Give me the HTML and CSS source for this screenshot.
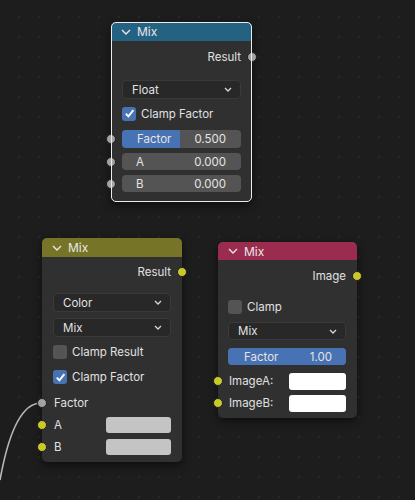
FILE: index.html
```html
<!DOCTYPE html>
<html>
<head>
<meta charset="utf-8">
<link rel="stylesheet" href="styles.css">
</head>
<body>
<div class="canvas">
  <svg class="wire" width="60" height="500" viewBox="0 0 60 500">
    <path d="M42 403 C 22 402, 9 430, 0 480" fill="none" stroke="#b8b8b8" stroke-width="1.6"/>
  </svg>

  <!-- Node 1: Float mix (selected) -->
  <div class="node n1 selected">
    <div class="head blue">
      <svg class="chev" width="10" height="6" viewBox="0 0 10 6"><path d="M1 1 L5 5 L9 1" fill="none" stroke="#e6e6e6" stroke-width="1.4"/></svg>
      <span>Mix</span>
    </div>
    <div class="body">
      <div class="row out r1-out"><span>Result</span><i class="sock right grey"></i></div>
      <div class="drop r1-drop"><span>Float</span><svg class="dchev" width="8" height="5" viewBox="0 0 8 5"><path d="M1 1 L4 4 L7 1" fill="none" stroke="#d8d8d8" stroke-width="1.3"/></svg></div>
      <div class="row check r1-check"><span class="box on"><svg width="11" height="11" viewBox="0 0 11 11"><path d="M1.8 5.6 L4.4 8.4 L9.4 2.2" fill="none" stroke="#fff" stroke-width="1.9"/></svg></span><span>Clamp Factor</span></div>
      <div class="field slider r1-fac"><i class="sock left grey"></i><div class="fill half"></div><span class="lab">Factor</span><span class="val">0.500</span></div>
      <div class="field r1-a"><i class="sock left grey"></i><span class="lab">A</span><span class="val">0.000</span></div>
      <div class="field r1-b"><i class="sock left grey"></i><span class="lab">B</span><span class="val">0.000</span></div>
    </div>
  </div>

  <!-- Node 2: Color mix -->
  <div class="node n2">
    <div class="head olive">
      <svg class="chev" width="10" height="6" viewBox="0 0 10 6"><path d="M1 1 L5 5 L9 1" fill="none" stroke="#e6e6e6" stroke-width="1.4"/></svg>
      <span>Mix</span>
    </div>
    <div class="body">
      <div class="row out r2-out"><span>Result</span><i class="sock right yellow"></i></div>
      <div class="drop r2-d1"><span>Color</span><svg class="dchev" width="8" height="5" viewBox="0 0 8 5"><path d="M1 1 L4 4 L7 1" fill="none" stroke="#d8d8d8" stroke-width="1.3"/></svg></div>
      <div class="drop r2-d2"><span>Mix</span><svg class="dchev" width="8" height="5" viewBox="0 0 8 5"><path d="M1 1 L4 4 L7 1" fill="none" stroke="#d8d8d8" stroke-width="1.3"/></svg></div>
      <div class="row check r2-c1"><span class="box"></span><span>Clamp Result</span></div>
      <div class="row check r2-c2"><span class="box on"><svg width="11" height="11" viewBox="0 0 11 11"><path d="M1.8 5.6 L4.4 8.4 L9.4 2.2" fill="none" stroke="#fff" stroke-width="1.9"/></svg></span><span>Clamp Factor</span></div>
      <div class="row in r2-fac"><i class="sock left grey"></i><span>Factor</span></div>
      <div class="row in r2-a"><i class="sock left yellow"></i><span>A</span><span class="swatch grey-sw"></span></div>
      <div class="row in r2-b"><i class="sock left yellow"></i><span>B</span><span class="swatch grey-sw"></span></div>
    </div>
  </div>

  <!-- Node 3: Image mix -->
  <div class="node n3">
    <div class="head red">
      <svg class="chev" width="10" height="6" viewBox="0 0 10 6"><path d="M1 1 L5 5 L9 1" fill="none" stroke="#e6e6e6" stroke-width="1.4"/></svg>
      <span>Mix</span>
    </div>
    <div class="body">
      <div class="row out r3-out"><span>Image</span><i class="sock right yellow"></i></div>
      <div class="row check r3-c"><span class="box"></span><span>Clamp</span></div>
      <div class="drop r3-d"><span>Mix</span><svg class="dchev" width="8" height="5" viewBox="0 0 8 5"><path d="M1 1 L4 4 L7 1" fill="none" stroke="#d8d8d8" stroke-width="1.3"/></svg></div>
      <div class="field slider r3-fac"><div class="fill full"></div><span class="lab">Factor</span><span class="val">1.00</span></div>
      <div class="row in r3-a"><i class="sock left yellow"></i><span>ImageA:</span><span class="swatch white-sw"></span></div>
      <div class="row in r3-b"><i class="sock left yellow"></i><span>ImageB:</span><span class="swatch white-sw"></span></div>
    </div>
  </div>
</div>
</body>
</html>
```

FILE: styles.css
```css
* { box-sizing: border-box; }
html, body { margin: 0; padding: 0; }
body {
  font-family: Inter, "DejaVu Sans", "Liberation Sans", sans-serif;
  font-size: 11.5px;
  color: #e0e0e0;
}
.canvas {
  position: relative;
  width: 415px;
  height: 500px;
  overflow: hidden;
  background-color: #1d1d1d;
  background-image: radial-gradient(circle, #272727 1.2px, transparent 1.6px);
  background-size: 20px 20px;
  background-position: 9px 7px;
}
.wire { position: absolute; left: 0; top: 0; }

.node {
  position: absolute;
  background: #303030;
  border-radius: 5px;
  box-shadow: 0 3px 8px rgba(0,0,0,0.55);
}
.node.selected::after {
  content: "";
  position: absolute;
  inset: 0;
  border: 1px solid #ececec;
  border-radius: 5px;
  pointer-events: none;
}
.n1 { left: 111px; top: 22px; width: 141px; height: 180px; }
.n2 { left: 42px; top: 238px; width: 140px; height: 224px; }
.n3 { left: 218px; top: 242px; width: 139px; height: 176px; }

.head {
  height: 19px;
  border-radius: 5px 5px 0 0;
  display: flex;
  align-items: center;
  padding-left: 10px;
  gap: 6px;
  color: #e8e8e8;
  font-size: 12px;
}
.n3 .head { height: 18px; }
.head.blue { background: #246283; }
.head.olive { background: #767427; }
.head.red { background: #9b2c4f; }
.chev { display: block; }

.body { padding: 0 11px; }
.n3 .body { padding: 0 11px 0 10px; }

.row {
  position: relative;
  display: flex;
  align-items: center;
  height: 18px;
}
.row.out { justify-content: flex-end; height: 20px; }
.row.check { gap: 5px; }
.row.in { padding-left: 1px; gap: 0; }

.sock {
  position: absolute;
  width: 10px;
  height: 10px;
  border-radius: 50%;
  border: 1px solid #202020;
  top: 50%;
  margin-top: -5px;
}
.sock.grey { background: #a3a3a3; }
.sock.yellow { background: #c9c92b; }
.n1 .sock.right { right: -16px; }
.n1 .sock.left { left: -16px; }
.n2 .sock.right { right: -16px; }
.n2 .sock.left { left: -16px; }
.n3 .sock.right { right: -16px; }
.n3 .sock.left { left: -15px; }

.drop {
  display: flex;
  align-items: center;
  justify-content: space-between;
  height: 19px;
  padding: 0 8px 0 9px;
  background: #282828;
  border: 1px solid #3a3a3a;
  border-radius: 4px;
  color: #e2e2e2;
}
.dchev { display: block; }

.box {
  width: 14px;
  height: 14px;
  border-radius: 3px;
  background: #545454;
  display: flex;
  align-items: center;
  justify-content: center;
  flex: none;
}
.box.on { background: #4772b3; }
.box svg { display: block; }

.field {
  position: relative;
  height: 17px;
  background: #545454;
  border-radius: 4px;
  display: flex;
  align-items: center;
  justify-content: space-between;
  padding: 0 15px 0 14px;
  color: #e4e4e4;
}
.field .lab, .field .val { position: relative; }
.slider { height: 18px; }
.fill {
  position: absolute;
  left: 0; top: 0; bottom: 0;
  background: #4772b3;
  border-radius: 4px 0 0 4px;
}
.fill.half { width: 49%; }
.fill.full { width: 100%; border-radius: 4px; }

.swatch {
  margin-left: auto;
  height: 16px;
  border-radius: 3px;
}
.grey-sw { width: 65px; background: #c4c4c4; }
.white-sw { width: 57px; background: #ffffff; height: 17px; }

/* vertical rhythm node 1 */
.r1-out { margin-top: 6px; }
.r1-drop { margin-top: 13px; }
.r1-check { margin-top: 6px; height: 17px; }
.r1-fac { margin-top: 8px; }
.r1-a { margin-top: 5px; }
.r1-b { margin-top: 5px; }
.r1-fac .lab { margin-left: 1px; }

/* node 2 */
.r2-out { margin-top: 5px; }
.r2-d1 { margin-top: 11px; }
.r2-d2 { margin-top: 6px; }
.r2-c1 { margin-top: 6px; }
.r2-c2 { margin-top: 7px; }
.r2-fac { margin-top: 8px; }
.r2-a { margin-top: 4px; }
.r2-b { margin-top: 4px; }

/* node 3 */
.r3-out { margin-top: 6px; }
.r3-c { margin-top: 12px; }
.r3-d { margin-top: 6px; height: 18px; }
.r3-fac { margin-top: 8px; height: 17px; padding: 0 14px 0 16px; }
.r3-a { margin-top: 7px; }
.r3-b { margin-top: 4px; }
```
